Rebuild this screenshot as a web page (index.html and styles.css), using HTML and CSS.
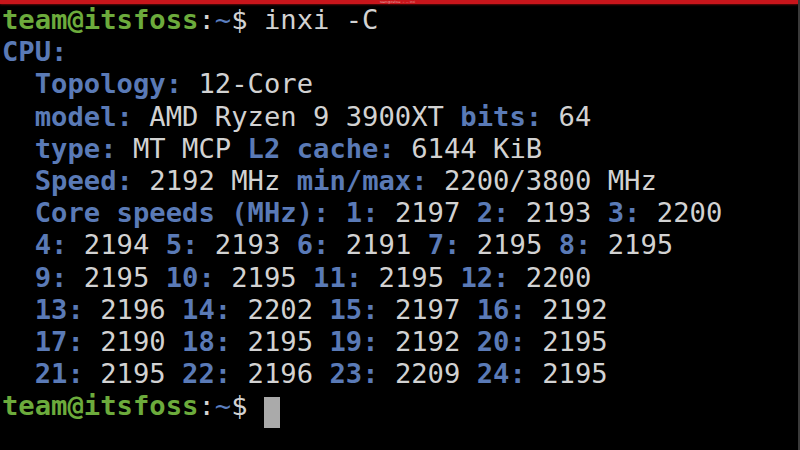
FILE: index.html
```html
<!DOCTYPE html>
<html>
<head>
<meta charset="utf-8">
<link rel="stylesheet" href="styles.css">
</head>
<body>
<div class="window">
  <div class="titlebar"><span class="title">team@itsfoss: ~ — inxi</span></div>
  <pre class="term"><span class="u">team@itsfoss</span><span class="v">:</span><span class="p">~</span><span class="v">$ inxi -C</span>
<span class="k">CPU:</span>
  <span class="k">Topology:</span> 12-Core
  <span class="k">model:</span> AMD Ryzen 9 3900XT <span class="k">bits:</span> 64
  <span class="k">type:</span> MT MCP <span class="k">L2 cache:</span> 6144 KiB
  <span class="k">Speed:</span> 2192 MHz <span class="k">min/max:</span> 2200/3800 MHz
  <span class="k">Core speeds (MHz):</span> <span class="k">1:</span> 2197 <span class="k">2:</span> 2193 <span class="k">3:</span> 2200
  <span class="k">4:</span> 2194 <span class="k">5:</span> 2193 <span class="k">6:</span> 2191 <span class="k">7:</span> 2195 <span class="k">8:</span> 2195
  <span class="k">9:</span> 2195 <span class="k">10:</span> 2195 <span class="k">11:</span> 2195 <span class="k">12:</span> 2200
  <span class="k">13:</span> 2196 <span class="k">14:</span> 2202 <span class="k">15:</span> 2197 <span class="k">16:</span> 2192
  <span class="k">17:</span> 2190 <span class="k">18:</span> 2195 <span class="k">19:</span> 2192 <span class="k">20:</span> 2195
  <span class="k">21:</span> 2195 <span class="k">22:</span> 2196 <span class="k">23:</span> 2209 <span class="k">24:</span> 2195
<span class="u">team@itsfoss</span><span class="v">:</span><span class="p">~</span><span class="v">$ </span><span class="cursor"> </span></pre>
</div>
</body>
</html>
```

FILE: styles.css
```css
html, body {
  margin: 0;
  padding: 0;
  background: #000;
}
.window {
  width: 800px;
  height: 450px;
  box-sizing: border-box;
  background: #000;
  border-right: 2px solid #3a3a3a;
  overflow: hidden;
}
.titlebar {
  height: 4px;
  background: #c8151b;
  box-shadow: 0 1px 2px #5a0a0a;
  position: relative;
  overflow: hidden;
}
.title {
  display: block;
  font: 3px "DejaVu Sans", sans-serif;
  color: #e8b0b0;
  padding-left: 380px;
  line-height: 4px;
}
.term {
  margin: 0;
  padding: 0 0 0 2px;
  font-family: "DejaVu Sans Mono", monospace;
  font-size: 27.2px;
  line-height: 32.2px;
  color: #d2d2d2;
  white-space: pre;
}
.u {
  color: #6cab3c;
  font-weight: bold;
}
.p {
  color: #5b7fbf;
}
.v {
  color: #d2d2d2;
}
.k {
  color: #5a7ab6;
  font-weight: bold;
}
.cursor {
  display: inline-block;
  width: 16.4px;
  height: 31px;
  background: #aaaaaa;
  vertical-align: -7px;
}
```
